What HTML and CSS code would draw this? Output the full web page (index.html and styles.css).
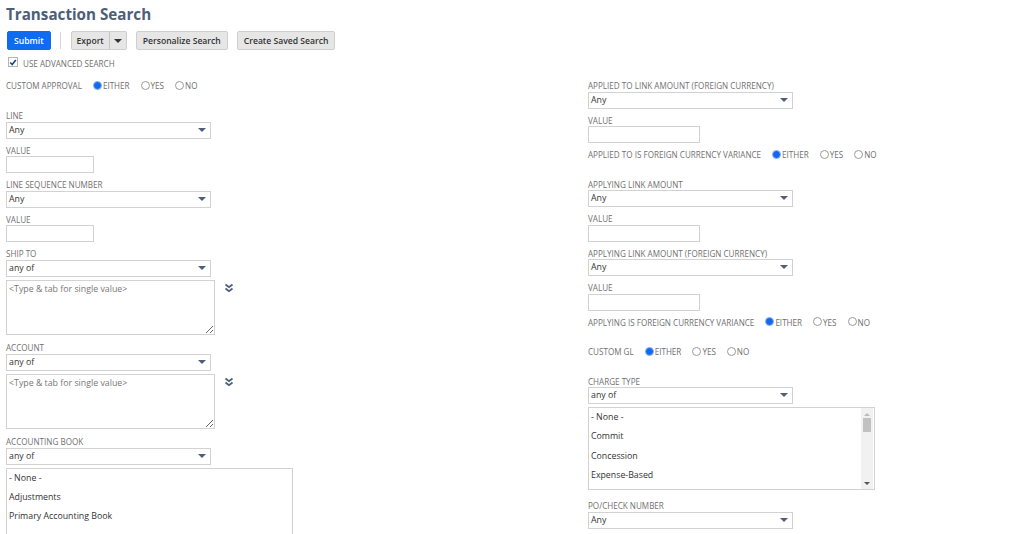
FILE: index.html
```html
<!DOCTYPE html>
<html lang="en">
<head>
    <meta charset="UTF-8">
    <meta name="viewport" content="width=device-width, initial-scale=1.0">
    <title>Transaction Search</title>
    <link rel="stylesheet" href="styles.css">
</head>
<body>
<div class="page">
    <h1 class="title">Transaction Search</h1>

    <div class="toolbar">
        <button class="btn btn-primary">Submit</button>
        <span class="sep"></span>
        <div class="btn-split">
            <button class="btn split-main">Export</button>
            <button class="btn split-caret"><span class="caret"></span></button>
        </div>
        <button class="btn">Personalize Search</button>
        <button class="btn">Create Saved Search</button>
    </div>

    <div class="check-row">
        <span class="checkbox">
            <svg width="10" height="9" viewBox="0 0 10 9"><polyline points="1.5,4.5 4,7 8.5,1.5" fill="none" stroke="#1f4580" stroke-width="2"/></svg>
        </span>
        <span class="check-text">USE ADVANCED SEARCH</span>
    </div>

    <div class="columns">
        <!-- left column -->
        <div class="col">
            <div class="radio-row first">
                <span class="lbl">CUSTOM APPROVAL</span>
                <span class="radio on"></span><span class="opt">EITHER</span>
                <span class="radio"></span><span class="opt">YES</span>
                <span class="radio"></span><span class="opt">NO</span>
            </div>

            <div class="field">
                <div class="lbl">LINE</div>
                <div class="select">Any<span class="arrow"></span></div>
            </div>
            <div class="field">
                <div class="lbl">VALUE</div>
                <input class="input" type="text">
            </div>
            <div class="field">
                <div class="lbl">LINE SEQUENCE NUMBER</div>
                <div class="select">Any<span class="arrow"></span></div>
            </div>
            <div class="field">
                <div class="lbl">VALUE</div>
                <input class="input" type="text">
            </div>

            <div class="field multi">
                <div class="lbl">SHIP TO</div>
                <div class="select">any of<span class="arrow"></span></div>
                <div class="multi-row">
                    <textarea class="area" placeholder="<Type & tab for single value>"></textarea>
                    <svg class="expand" width="10" height="10" viewBox="0 0 10 10"><polyline points="1.5,1.5 5,4.2 8.5,1.5" fill="none" stroke="#4d5f7a" stroke-width="1.8"/><polyline points="1.5,5.5 5,8.2 8.5,5.5" fill="none" stroke="#4d5f7a" stroke-width="1.8"/></svg>
                </div>
            </div>

            <div class="field multi">
                <div class="lbl">ACCOUNT</div>
                <div class="select">any of<span class="arrow"></span></div>
                <div class="multi-row">
                    <textarea class="area" placeholder="<Type & tab for single value>"></textarea>
                    <svg class="expand" width="10" height="10" viewBox="0 0 10 10"><polyline points="1.5,1.5 5,4.2 8.5,1.5" fill="none" stroke="#4d5f7a" stroke-width="1.8"/><polyline points="1.5,5.5 5,8.2 8.5,5.5" fill="none" stroke="#4d5f7a" stroke-width="1.8"/></svg>
                </div>
            </div>

            <div class="field">
                <div class="lbl">ACCOUNTING BOOK</div>
                <div class="select">any of<span class="arrow"></span></div>
                <div class="listbox">
                    <div class="items">
                        <div class="item">- None -</div>
                        <div class="item">Adjustments</div>
                        <div class="item">Primary Accounting Book</div>
                    </div>
                </div>
            </div>
        </div>

        <!-- right column -->
        <div class="col">
            <div class="field">
                <div class="lbl">APPLIED TO LINK AMOUNT (FOREIGN CURRENCY)</div>
                <div class="select">Any<span class="arrow"></span></div>
            </div>
            <div class="field">
                <div class="lbl">VALUE</div>
                <input class="input wide" type="text">
            </div>
            <div class="radio-row">
                <span class="lbl">APPLIED TO IS FOREIGN CURRENCY VARIANCE</span>
                <span class="radio on"></span><span class="opt">EITHER</span>
                <span class="radio"></span><span class="opt">YES</span>
                <span class="radio"></span><span class="opt">NO</span>
            </div>
            <div class="field">
                <div class="lbl">APPLYING LINK AMOUNT</div>
                <div class="select">Any<span class="arrow"></span></div>
            </div>
            <div class="field">
                <div class="lbl">VALUE</div>
                <input class="input wide" type="text">
            </div>
            <div class="field">
                <div class="lbl">APPLYING LINK AMOUNT (FOREIGN CURRENCY)</div>
                <div class="select">Any<span class="arrow"></span></div>
            </div>
            <div class="field">
                <div class="lbl">VALUE</div>
                <input class="input wide" type="text">
            </div>
            <div class="radio-row">
                <span class="lbl">APPLYING IS FOREIGN CURRENCY VARIANCE</span>
                <span class="radio on"></span><span class="opt">EITHER</span>
                <span class="radio"></span><span class="opt">YES</span>
                <span class="radio"></span><span class="opt">NO</span>
            </div>
            <div class="radio-row">
                <span class="lbl">CUSTOM GL</span>
                <span class="radio on"></span><span class="opt">EITHER</span>
                <span class="radio"></span><span class="opt">YES</span>
                <span class="radio"></span><span class="opt">NO</span>
            </div>
            <div class="field list-field">
                <div class="lbl">CHARGE TYPE</div>
                <div class="select">any of<span class="arrow"></span></div>
                <div class="listbox">
                    <div class="items">
                        <div class="item">- None -</div>
                        <div class="item">Commit</div>
                        <div class="item">Concession</div>
                        <div class="item">Expense-Based</div>
                    </div>
                    <div class="scrollbar">
                        <span class="sb-up"></span>
                        <span class="sb-thumb"></span>
                        <span class="sb-down"></span>
                    </div>
                </div>
            </div>
            <div class="field">
                <div class="lbl">PO/CHECK NUMBER</div>
                <div class="select">Any<span class="arrow"></span></div>
            </div>
        </div>
    </div>
</div>
</body>
</html>
```

FILE: styles.css
```css
html { overflow: hidden; }
body { margin: 0; font-family: "Open Sans", Arial, sans-serif; color: #333; background: #fff; }
.page { padding: 4px 6px 0; }

.title { margin: 0; font-size: 15.2px; line-height: 20px; font-weight: 700; color: #4d5e78; }

.toolbar { display: flex; align-items: center; gap: 9px; margin-top: 7px; height: 19px; }
.btn { height: 19px; padding: 0 6px; border: 1px solid #cfcfcf; border-radius: 2px; background: #e6e6e6; font-family: inherit; font-size: 8.6px; font-weight: 600; color: #333; cursor: pointer; }
.btn-primary { margin-left: 1px; background: #0d6cf2; border-color: #0d6cf2; color: #fff; }
.sep { width: 1px; height: 17px; background: #d6d6d6; margin-right: 1px; }
.btn-split { display: flex; }
.split-main { padding: 0 5px; border-radius: 2px 0 0 2px; }
.split-caret { width: 18px; padding: 0; border-left: 1px solid #c4c4c4; border-radius: 0 2px 2px 0; display: flex; align-items: center; justify-content: center; margin-left: -1px; }
.caret { border-top: 4px solid #333; border-left: 4px solid transparent; border-right: 4px solid transparent; }

.check-row { display: flex; align-items: center; margin-top: 6px; height: 12px; padding-left: 2px; }
.checkbox { width: 10px; height: 10px; box-sizing: border-box; border: 1px solid #b5b5b5; background: #fff; display: flex; align-items: center; justify-content: center; }
.check-text { margin-left: 5px; font-size: 8.1px; color: #6e6e6e; padding-top: 3px; }

.columns { display: grid; grid-template-columns: 582px 1fr; margin-top: 11px; }
.col { display: flex; flex-direction: column; }

.lbl { font-size: 8.1px; line-height: 12px; color: #707070; text-transform: uppercase; }
.field { margin-bottom: 5px; }
.field .lbl { height: 12px; line-height: 14px; margin-bottom: 0.5px; }

.select { position: relative; width: 205px; height: 17px; box-sizing: border-box; border: 1px solid #d2d2d2; padding-left: 2px; font-size: 8.8px; line-height: 15px; color: #333; background: #fff; }
.arrow { position: absolute; right: 4px; top: 5px; border-top: 4px solid #4d5f7a; border-left: 4px solid transparent; border-right: 4px solid transparent; }

.input { display: block; width: 88px; height: 17px; box-sizing: border-box; margin: 0; border: 1px solid #d2d2d2; padding: 0 2px; font-family: inherit; font-size: 8.8px; }
.input.wide { width: 112px; }

.multi { margin-bottom: 6.5px; }
.multi-row { display: flex; align-items: flex-start; margin-top: 3px; }
.area { display: block; width: 209px; height: 55px; box-sizing: border-box; margin: 0; border: 1px solid #d2d2d2; padding: 2px 2px; font-family: inherit; font-size: 8.8px; color: #333; }
.area::placeholder { color: #777; }
.expand { margin: 3px 0 0 9px; }

.radio-row { display: flex; align-items: center; height: 12px; margin-bottom: 17.5px; }
.radio-row.first { margin-bottom: 18px; }
.radio-row .lbl { margin-right: 11px; padding-top: 2px; }
.radio { width: 9px; height: 9px; box-sizing: border-box; border: 1px solid #9a9a9a; border-radius: 50%; background: #fff; }
.radio.on { background: #1468ee; border-color: #8fb5f2; }
.opt { font-size: 8.1px; color: #6e6e6e; margin: 1px 11px 0 1px; }

.listbox { display: flex; width: 287px; height: 83px; box-sizing: border-box; margin-top: 3px; border: 1px solid #d2d2d2; background: #fff; }
.list-field { margin-bottom: 9px; }
.items { flex: 1; }
.item { height: 19.4px; line-height: 19.4px; padding-left: 2px; font-size: 8.8px; color: #333; }
.scrollbar { width: 12px; margin-right: 1px; background: #f1f1f1; display: flex; flex-direction: column; align-items: center; }
.sb-up { margin-top: 5px; border-bottom: 3px solid #bcbcbc; border-left: 3px solid transparent; border-right: 3px solid transparent; }
.sb-thumb { width: 8px; height: 14px; margin-top: 2px; background: #c1c1c1; }
.sb-down { margin-top: auto; margin-bottom: 4px; border-top: 3px solid #555; border-left: 3px solid transparent; border-right: 3px solid transparent; }
```
